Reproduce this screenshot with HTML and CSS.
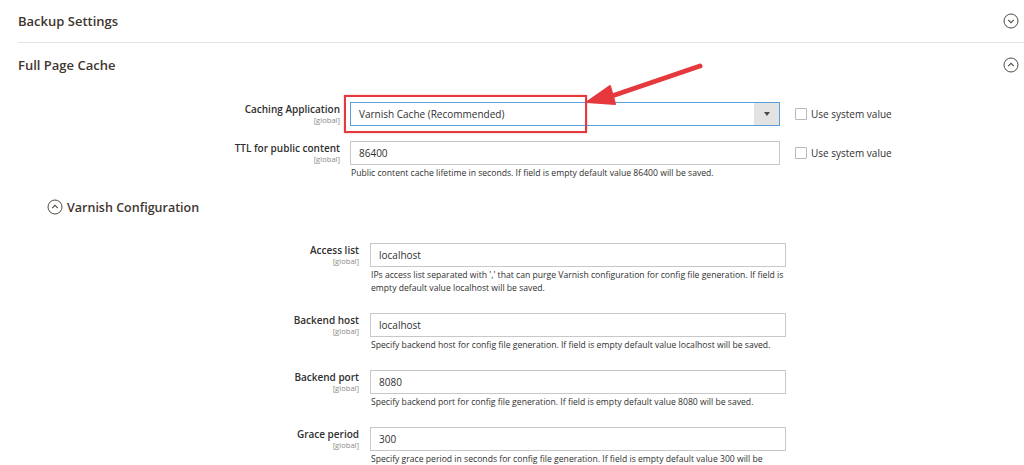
FILE: index.html
```html
<!DOCTYPE html>
<html>
<head>
<meta charset="utf-8">
<link rel="stylesheet" href="styles.css">
</head>
<body>
<div class="page">
  <div class="section-head">
    <span class="section-title">Backup Settings</span>
    <svg class="toggle" width="16" height="16" viewBox="0 0 16 16"><circle cx="8" cy="8" r="7" fill="none" stroke="#514943" stroke-width="1"/><path d="M5.2 6.8 L8 9.6 L10.8 6.8" fill="none" stroke="#514943" stroke-width="1.1"/></svg>
  </div>
  <div class="section-head">
    <span class="section-title">Full Page Cache</span>
    <svg class="toggle" width="16" height="16" viewBox="0 0 16 16"><circle cx="8" cy="8" r="7" fill="none" stroke="#514943" stroke-width="1"/><path d="M5.2 9.2 L8 6.4 L10.8 9.2" fill="none" stroke="#514943" stroke-width="1.1"/></svg>
  </div>

  <div class="fieldset">
    <div class="row row-first">
      <div class="label"><span class="label-text">Caching Application</span><span class="scope">[global]</span></div>
      <div class="control">
        <div class="select">
          <span class="select-value">Varnish Cache (Recommended)</span>
          <span class="select-btn"><span class="caret"></span></span>
        </div>
      </div>
      <label class="use-default"><span class="checkbox"></span>Use system value</label>
    </div>
    <div class="row">
      <div class="label"><span class="label-text">TTL for public content</span><span class="scope">[global]</span></div>
      <div class="control">
        <div class="input">86400</div>
        <p class="note">Public content cache lifetime in seconds. If field is empty default value 86400 will be saved.</p>
      </div>
      <label class="use-default"><span class="checkbox"></span>Use system value</label>
    </div>
  </div>

  <div class="sub-head">
    <svg class="sub-toggle" width="16" height="16" viewBox="0 0 16 16"><circle cx="8" cy="8" r="7" fill="none" stroke="#514943" stroke-width="1"/><path d="M5.2 9.2 L8 6.4 L10.8 9.2" fill="none" stroke="#514943" stroke-width="1.1"/></svg>
    <span class="sub-title">Varnish Configuration</span>
  </div>

  <div class="fieldset nested">
    <div class="row">
      <div class="label"><span class="label-text">Access list</span><span class="scope">[global]</span></div>
      <div class="control">
        <div class="input">localhost</div>
        <p class="note">IPs access list separated with ',' that can purge Varnish configuration for config file generation. If field is empty default value localhost will be saved.</p>
      </div>
    </div>
    <div class="row">
      <div class="label"><span class="label-text">Backend host</span><span class="scope">[global]</span></div>
      <div class="control">
        <div class="input">localhost</div>
        <p class="note">Specify backend host for config file generation. If field is empty default value localhost will be saved.</p>
      </div>
    </div>
    <div class="row">
      <div class="label"><span class="label-text">Backend port</span><span class="scope">[global]</span></div>
      <div class="control">
        <div class="input">8080</div>
        <p class="note">Specify backend port for config file generation. If field is empty default value 8080 will be saved.</p>
      </div>
    </div>
    <div class="row">
      <div class="label"><span class="label-text">Grace period</span><span class="scope">[global]</span></div>
      <div class="control">
        <div class="input">300</div>
        <p class="note">Specify grace period in seconds for config file generation. If field is empty default value 300 will be saved.</p>
      </div>
    </div>
  </div>

  <div class="highlight-box"></div>
  <svg class="arrow" width="130" height="60" viewBox="0 0 130 60">
    <path d="M120 6 L26 38" stroke="#e5393e" stroke-width="5" stroke-linecap="round" fill="none"/>
    <path d="M7 42 L30 26 L35 44 Z" fill="#e5393e" stroke="#e5393e" stroke-width="2" stroke-linejoin="round"/>
  </svg>
</div>
</body>
</html>
```

FILE: styles.css
```css
* { box-sizing: border-box; }
html, body { margin: 0; padding: 0; background: #fff; }
body {
  font-family: "Open Sans", "Liberation Sans", sans-serif;
  color: #303030;
  width: 1024px;
  height: 465px;
  overflow: hidden;
}
.page { position: relative; }

.section-head {
  display: flex;
  align-items: center;
  justify-content: space-between;
  height: 43px;
  margin-left: 18px;
  padding-right: 5px;
  border-bottom: 1px solid #e3e3e3;
}
.section-head + .section-head { border-bottom: none; height: 44px; }
.section-title {
  font-size: 13px;
  font-weight: 600;
  color: #41362f;
}
.toggle { display: block; }

.fieldset { padding-top: 15px; }
.row { display: flex; align-items: flex-start; margin-bottom: 15px; }
.fieldset .row:last-child { margin-bottom: 0; }
.label {
  width: 340px;
  text-align: right;
  display: flex;
  flex-direction: column;
  align-items: flex-end;
  padding-top: 1px;
}
.label-text { font-size: 10px; font-weight: 600; line-height: 13px; color: #303030; }
.scope { font-size: 7.6px; line-height: 9px; color: #8a8a8a; }
.control { width: 430px; margin-left: 10px; }

.select, .input {
  height: 24px;
  border: 1px solid #c8c8c8;
  font-size: 10px;
  line-height: 22px;
  padding-left: 8px;
  color: #303030;
  background: #fff;
}
.select {
  display: flex;
  justify-content: space-between;
  border-color: #5b9fdc;
  padding-right: 0;
}
.select-btn {
  width: 25px;
  background: #e3e3e3;
  display: flex;
  align-items: center;
  justify-content: center;
}
.caret {
  width: 0; height: 0;
  border-left: 3px solid transparent;
  border-right: 3px solid transparent;
  border-top: 4px solid #514943;
}
.note {
  margin: 2px 0 0 1px;
  font-size: 8.65px;
  line-height: 13px;
  color: #303030;
}
.use-default {
  display: flex;
  align-items: center;
  margin-left: 15px;
  margin-top: 6px;
  font-size: 10px;
  line-height: 12px;
  color: #303030;
}
.checkbox {
  width: 12px; height: 12px;
  border: 1px solid #b8b8b8;
  border-radius: 1px;
  margin-right: 4px;
  background: #fff;
}

.sub-head {
  display: flex;
  align-items: center;
  padding-left: 47px;
  margin-top: 12px;
  height: 30px;
}
.sub-toggle { display: block; margin-right: 4px; }
.sub-title { font-size: 12.5px; font-weight: 600; color: #41362f; }

.nested { padding-top: 21px; }
.nested .label { width: 359px; }
.nested .control { width: 416px; margin-left: 11px; }
.nested .row { margin-bottom: 18px; }

.highlight-box {
  position: absolute;
  left: 344px; top: 95px;
  width: 243px; height: 38px;
  border: 2px solid #e5393e;
  box-shadow: 0 0 2px rgba(200,0,0,0.3);
}
.arrow {
  position: absolute;
  left: 580px; top: 60px;
}
```
